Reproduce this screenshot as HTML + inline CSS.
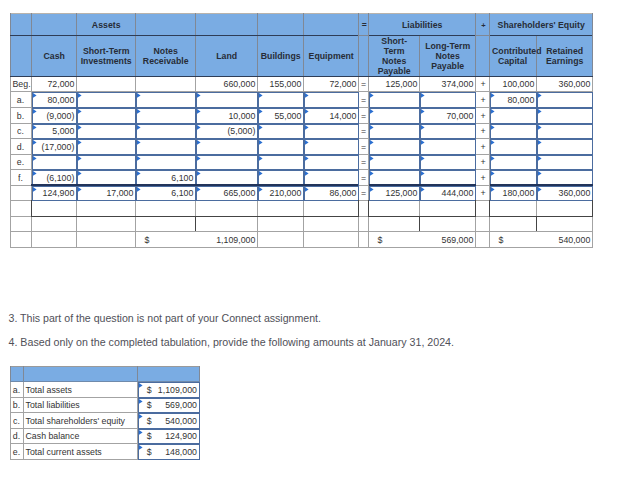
<!DOCTYPE html>
<html><head><meta charset="utf-8"><style>
html,body{margin:0;padding:0;background:#fff;}
body{width:624px;height:482px;position:relative;overflow:hidden;font-family:"Liberation Sans",sans-serif;}
body>div,body>svg{position:absolute;box-sizing:content-box;}
.t{white-space:nowrap;}
</style></head><body>
<div style="left:10px;top:13px;width:583px;height:64px;background:#7aace3;"></div>
<div style="left:10px;top:91px;width:583px;height:1px;background:#a3a3a3;"></div>
<div style="left:10px;top:107px;width:583px;height:1px;background:#a3a3a3;"></div>
<div style="left:10px;top:123px;width:583px;height:1px;background:#a3a3a3;"></div>
<div style="left:10px;top:138px;width:583px;height:1px;background:#a3a3a3;"></div>
<div style="left:10px;top:154px;width:583px;height:1px;background:#a3a3a3;"></div>
<div style="left:10px;top:169px;width:583px;height:1px;background:#a3a3a3;"></div>
<div style="left:10px;top:185px;width:583px;height:1px;background:#a3a3a3;"></div>
<div style="left:10px;top:200px;width:583px;height:1px;background:#a3a3a3;"></div>
<div style="left:10px;top:216px;width:583px;height:1px;background:#a3a3a3;"></div>
<div style="left:10px;top:231px;width:583px;height:1px;background:#a3a3a3;"></div>
<div style="left:10px;top:247px;width:583px;height:1px;background:#a3a3a3;"></div>
<div style="left:10px;top:76px;width:1px;height:172px;background:#a3a3a3;"></div>
<div style="left:31px;top:76px;width:1px;height:172px;background:#a3a3a3;"></div>
<div style="left:76px;top:76px;width:1px;height:172px;background:#a3a3a3;"></div>
<div style="left:135px;top:76px;width:1px;height:172px;background:#a3a3a3;"></div>
<div style="left:195px;top:76px;width:1px;height:172px;background:#a3a3a3;"></div>
<div style="left:257px;top:76px;width:1px;height:172px;background:#a3a3a3;"></div>
<div style="left:303px;top:76px;width:1px;height:172px;background:#a3a3a3;"></div>
<div style="left:358px;top:76px;width:1px;height:172px;background:#a3a3a3;"></div>
<div style="left:368px;top:76px;width:1px;height:172px;background:#a3a3a3;"></div>
<div style="left:419px;top:76px;width:1px;height:172px;background:#a3a3a3;"></div>
<div style="left:475px;top:76px;width:1px;height:172px;background:#a3a3a3;"></div>
<div style="left:489px;top:76px;width:1px;height:172px;background:#a3a3a3;"></div>
<div style="left:536px;top:76px;width:1px;height:172px;background:#a3a3a3;"></div>
<div style="left:592px;top:76px;width:1px;height:172px;background:#a3a3a3;"></div>
<div style="left:10px;top:13px;width:583px;height:1px;background:#b8b3ac;"></div>
<div style="left:10px;top:13px;width:1px;height:63px;background:#808895;"></div>
<div style="left:31px;top:13px;width:1px;height:63px;background:#808895;"></div>
<div style="left:76px;top:13px;width:1px;height:63px;background:#808895;"></div>
<div style="left:135px;top:13px;width:1px;height:63px;background:#808895;"></div>
<div style="left:195px;top:13px;width:1px;height:63px;background:#808895;"></div>
<div style="left:257px;top:13px;width:1px;height:63px;background:#808895;"></div>
<div style="left:303px;top:13px;width:1px;height:63px;background:#808895;"></div>
<div style="left:358px;top:13px;width:1px;height:63px;background:#808895;"></div>
<div style="left:368px;top:13px;width:1px;height:63px;background:#808895;"></div>
<div style="left:419px;top:35px;width:1px;height:41px;background:#808895;"></div>
<div style="left:475px;top:13px;width:1px;height:63px;background:#808895;"></div>
<div style="left:489px;top:13px;width:1px;height:63px;background:#808895;"></div>
<div style="left:536px;top:35px;width:1px;height:41px;background:#808895;"></div>
<div style="left:592px;top:13px;width:1px;height:63px;background:#808895;"></div>
<div style="left:10px;top:35px;width:348px;height:1px;background:#2e3d57;"></div>
<div style="left:369px;top:35px;width:106px;height:1px;background:#2e3d57;"></div>
<div style="left:490px;top:35px;width:102px;height:1px;background:#2e3d57;"></div>
<div style="left:10px;top:76px;width:583px;height:1px;background:#2e3d57;"></div>
<div style="left:359px;top:35px;width:9px;height:1px;background:#808895;"></div>
<div style="left:476px;top:35px;width:13px;height:1px;background:#808895;"></div>
<div class="t" style="left:56.7px;top:20.15px;width:99px;font-size:8.75px;font-weight:bold;line-height:10.3px;text-align:center;color:#272c37;white-space:nowrap;transform:scaleY(1.08)">Assets</div>
<div class="t" style="left:339.2px;top:20.15px;width:50.0px;font-size:8.75px;font-weight:bold;line-height:10.3px;text-align:center;color:#272c37;white-space:nowrap;transform:scaleY(1.08)"><span style="font-size:8.6px;position:relative;top:-0.2px">=</span></div>
<div class="t" style="left:348.7px;top:20.15px;width:147px;font-size:8.75px;font-weight:bold;line-height:10.3px;text-align:center;color:#272c37;white-space:nowrap;transform:scaleY(1.08)">Liabilities</div>
<div class="t" style="left:456.5px;top:20.15px;width:54.0px;font-size:8.75px;font-weight:bold;line-height:10.3px;text-align:center;color:#272c37;white-space:nowrap;transform:scaleY(1.08)"><span style="font-size:7.5px">+</span></div>
<div class="t" style="left:469.7px;top:20.15px;width:143px;font-size:8.75px;font-weight:bold;line-height:10.3px;text-align:center;color:#272c37;white-space:nowrap;transform:scaleY(1.08)">Shareholders' Equity</div>
<div class="t" style="left:11.7px;top:50.95px;width:85px;font-size:8.75px;font-weight:bold;line-height:10.3px;text-align:center;color:#272c37;white-space:nowrap;transform:scaleY(1.08)">Cash</div>
<div class="t" style="left:56.7px;top:45.80px;width:99px;font-size:8.75px;font-weight:bold;line-height:10.3px;text-align:center;color:#272c37;white-space:nowrap;transform:scaleY(1.08)">Short-Term</div>
<div class="t" style="left:56.7px;top:56.10px;width:99px;font-size:8.75px;font-weight:bold;line-height:10.3px;text-align:center;color:#272c37;white-space:nowrap;transform:scaleY(1.08)">Investments</div>
<div class="t" style="left:115.7px;top:45.80px;width:100px;font-size:8.75px;font-weight:bold;line-height:10.3px;text-align:center;color:#272c37;white-space:nowrap;transform:scaleY(1.08)">Notes</div>
<div class="t" style="left:115.7px;top:56.10px;width:100px;font-size:8.75px;font-weight:bold;line-height:10.3px;text-align:center;color:#272c37;white-space:nowrap;transform:scaleY(1.08)">Receivable</div>
<div class="t" style="left:175.7px;top:50.95px;width:102px;font-size:8.75px;font-weight:bold;line-height:10.3px;text-align:center;color:#272c37;white-space:nowrap;transform:scaleY(1.08)">Land</div>
<div class="t" style="left:237.7px;top:50.95px;width:86px;font-size:8.75px;font-weight:bold;line-height:10.3px;text-align:center;color:#272c37;white-space:nowrap;transform:scaleY(1.08)">Buildings</div>
<div class="t" style="left:283.7px;top:50.95px;width:95px;font-size:8.75px;font-weight:bold;line-height:10.3px;text-align:center;color:#272c37;white-space:nowrap;transform:scaleY(1.08)">Equipment</div>
<div class="t" style="left:348.7px;top:35.50px;width:91px;font-size:8.75px;font-weight:bold;line-height:10.3px;text-align:center;color:#272c37;white-space:nowrap;transform:scaleY(1.08)">Short-</div>
<div class="t" style="left:348.7px;top:45.80px;width:91px;font-size:8.75px;font-weight:bold;line-height:10.3px;text-align:center;color:#272c37;white-space:nowrap;transform:scaleY(1.08)">Term</div>
<div class="t" style="left:348.7px;top:56.10px;width:91px;font-size:8.75px;font-weight:bold;line-height:10.3px;text-align:center;color:#272c37;white-space:nowrap;transform:scaleY(1.08)">Notes</div>
<div class="t" style="left:348.7px;top:66.40px;width:91px;font-size:8.75px;font-weight:bold;line-height:10.3px;text-align:center;color:#272c37;white-space:nowrap;transform:scaleY(1.08)">Payable</div>
<div class="t" style="left:399.7px;top:40.65px;width:96px;font-size:8.75px;font-weight:bold;line-height:10.3px;text-align:center;color:#272c37;white-space:nowrap;transform:scaleY(1.08)">Long-Term</div>
<div class="t" style="left:399.7px;top:50.95px;width:96px;font-size:8.75px;font-weight:bold;line-height:10.3px;text-align:center;color:#272c37;white-space:nowrap;transform:scaleY(1.08)">Notes</div>
<div class="t" style="left:399.7px;top:61.25px;width:96px;font-size:8.75px;font-weight:bold;line-height:10.3px;text-align:center;color:#272c37;white-space:nowrap;transform:scaleY(1.08)">Payable</div>
<div class="t" style="left:492px;top:45.80px;font-size:8.75px;font-weight:bold;line-height:10.3px;color:#272c37;white-space:nowrap;transform:scaleY(1.08)">Contributed</div>
<div class="t" style="left:469px;top:56.10px;width:87px;font-size:8.75px;font-weight:bold;line-height:10.3px;text-align:center;color:#272c37;white-space:nowrap;transform:scaleY(1.08)">Capital</div>
<div class="t" style="left:516.7px;top:45.80px;width:96px;font-size:8.75px;font-weight:bold;line-height:10.3px;text-align:center;color:#272c37;white-space:nowrap;transform:scaleY(1.08)">Retained</div>
<div class="t" style="left:516.7px;top:56.10px;width:96px;font-size:8.75px;font-weight:bold;line-height:10.3px;text-align:center;color:#272c37;white-space:nowrap;transform:scaleY(1.08)">Earnings</div>
<div class="t" style="left:10px;top:77.3px;width:27px;height:15px;font-size:8.8px;text-align:left;color:#333333;transform:scaleY(1.1);padding-left:2.5px;box-sizing:border-box;line-height:15px;">Beg.</div>
<div class="t" style="left:358.6px;top:77.3px;width:10.0px;height:15px;font-size:8.8px;text-align:center;color:#333333;transform:scaleY(1.1);line-height:15px;">=</div>
<div class="t" style="left:476px;top:77.3px;width:14px;height:15px;font-size:8.8px;text-align:center;color:#333333;transform:scaleY(1.1);line-height:15px;">+</div>
<div class="t" style="left:31px;top:77.3px;width:45px;height:15px;font-size:8.8px;text-align:right;color:#333333;transform:scaleY(1.1);padding-right:1.7px;box-sizing:border-box;line-height:15px;">72,000</div>
<div class="t" style="left:195px;top:77.3px;width:62px;height:15px;font-size:8.8px;text-align:right;color:#333333;transform:scaleY(1.1);padding-right:1.7px;box-sizing:border-box;line-height:15px;">660,000</div>
<div class="t" style="left:257px;top:77.3px;width:46px;height:15px;font-size:8.8px;text-align:right;color:#333333;transform:scaleY(1.1);padding-right:1.7px;box-sizing:border-box;line-height:15px;">155,000</div>
<div class="t" style="left:303px;top:77.3px;width:55px;height:15px;font-size:8.8px;text-align:right;color:#333333;transform:scaleY(1.1);padding-right:1.7px;box-sizing:border-box;line-height:15px;">72,000</div>
<div class="t" style="left:368px;top:77.3px;width:51px;height:15px;font-size:8.8px;text-align:right;color:#333333;transform:scaleY(1.1);padding-right:1.7px;box-sizing:border-box;line-height:15px;">125,000</div>
<div class="t" style="left:419px;top:77.3px;width:56px;height:15px;font-size:8.8px;text-align:right;color:#333333;transform:scaleY(1.1);padding-right:1.7px;box-sizing:border-box;line-height:15px;">374,000</div>
<div class="t" style="left:489px;top:77.3px;width:47px;height:15px;font-size:8.8px;text-align:right;color:#333333;transform:scaleY(1.1);padding-right:1.7px;box-sizing:border-box;line-height:15px;">100,000</div>
<div class="t" style="left:536px;top:77.3px;width:56px;height:15px;font-size:8.8px;text-align:right;color:#333333;transform:scaleY(1.1);padding-right:1.7px;box-sizing:border-box;line-height:15px;">360,000</div>
<div class="t" style="left:10px;top:92.3px;width:21px;height:16px;font-size:8.8px;text-align:center;color:#333333;transform:scaleY(1.1);line-height:16px;">a.</div>
<div class="t" style="left:358.6px;top:92.3px;width:10.0px;height:16px;font-size:8.8px;text-align:center;color:#333333;transform:scaleY(1.1);line-height:16px;">=</div>
<div class="t" style="left:476px;top:92.3px;width:14px;height:16px;font-size:8.8px;text-align:center;color:#333333;transform:scaleY(1.1);line-height:16px;">+</div>
<div style="left:32px;top:92px;width:43px;height:14px;border:1px solid #4b6c9f;"></div>
<svg style="position:absolute;left:33px;top:93px" width="5" height="6"><polygon points="0,0 3.6,2.4 0,4.8" fill="#2b6fd0"/></svg>
<div class="t" style="left:31px;top:92.3px;width:45px;height:16px;font-size:8.8px;text-align:right;color:#333333;transform:scaleY(1.1);padding-right:1.7px;box-sizing:border-box;line-height:16px;">80,000</div>
<div style="left:77px;top:92px;width:57px;height:14px;border:1px solid #4b6c9f;"></div>
<svg style="position:absolute;left:78px;top:93px" width="5" height="6"><polygon points="0,0 3.6,2.4 0,4.8" fill="#2b6fd0"/></svg>
<div style="left:136px;top:92px;width:58px;height:14px;border:1px solid #4b6c9f;"></div>
<svg style="position:absolute;left:137px;top:93px" width="5" height="6"><polygon points="0,0 3.6,2.4 0,4.8" fill="#2b6fd0"/></svg>
<div style="left:196px;top:92px;width:60px;height:14px;border:1px solid #4b6c9f;"></div>
<svg style="position:absolute;left:197px;top:93px" width="5" height="6"><polygon points="0,0 3.6,2.4 0,4.8" fill="#2b6fd0"/></svg>
<div style="left:258px;top:92px;width:44px;height:14px;border:1px solid #4b6c9f;"></div>
<svg style="position:absolute;left:259px;top:93px" width="5" height="6"><polygon points="0,0 3.6,2.4 0,4.8" fill="#2b6fd0"/></svg>
<div style="left:304px;top:92px;width:53px;height:14px;border:1px solid #4b6c9f;"></div>
<svg style="position:absolute;left:305px;top:93px" width="5" height="6"><polygon points="0,0 3.6,2.4 0,4.8" fill="#2b6fd0"/></svg>
<div style="left:369px;top:92px;width:49px;height:14px;border:1px solid #4b6c9f;"></div>
<svg style="position:absolute;left:370px;top:93px" width="5" height="6"><polygon points="0,0 3.6,2.4 0,4.8" fill="#2b6fd0"/></svg>
<div style="left:420px;top:92px;width:54px;height:14px;border:1px solid #4b6c9f;"></div>
<svg style="position:absolute;left:421px;top:93px" width="5" height="6"><polygon points="0,0 3.6,2.4 0,4.8" fill="#2b6fd0"/></svg>
<div style="left:490px;top:92px;width:45px;height:14px;border:1px solid #4b6c9f;"></div>
<svg style="position:absolute;left:491px;top:93px" width="5" height="6"><polygon points="0,0 3.6,2.4 0,4.8" fill="#2b6fd0"/></svg>
<div class="t" style="left:489px;top:92.3px;width:47px;height:16px;font-size:8.8px;text-align:right;color:#333333;transform:scaleY(1.1);padding-right:1.7px;box-sizing:border-box;line-height:16px;">80,000</div>
<div style="left:537px;top:92px;width:54px;height:14px;border:1px solid #4b6c9f;"></div>
<svg style="position:absolute;left:538px;top:93px" width="5" height="6"><polygon points="0,0 3.6,2.4 0,4.8" fill="#2b6fd0"/></svg>
<div class="t" style="left:10px;top:108.3px;width:21px;height:16px;font-size:8.8px;text-align:center;color:#333333;transform:scaleY(1.1);line-height:16px;">b.</div>
<div class="t" style="left:358.6px;top:108.3px;width:10.0px;height:16px;font-size:8.8px;text-align:center;color:#333333;transform:scaleY(1.1);line-height:16px;">=</div>
<div class="t" style="left:476px;top:108.3px;width:14px;height:16px;font-size:8.8px;text-align:center;color:#333333;transform:scaleY(1.1);line-height:16px;">+</div>
<div style="left:32px;top:108px;width:43px;height:14px;border:1px solid #4b6c9f;"></div>
<svg style="position:absolute;left:33px;top:109px" width="5" height="6"><polygon points="0,0 3.6,2.4 0,4.8" fill="#2b6fd0"/></svg>
<div class="t" style="left:31px;top:108.3px;width:45px;height:16px;font-size:8.8px;text-align:right;color:#333333;transform:scaleY(1.1);padding-right:1.7px;box-sizing:border-box;line-height:16px;">(9,000)</div>
<div style="left:77px;top:108px;width:57px;height:14px;border:1px solid #4b6c9f;"></div>
<svg style="position:absolute;left:78px;top:109px" width="5" height="6"><polygon points="0,0 3.6,2.4 0,4.8" fill="#2b6fd0"/></svg>
<div style="left:136px;top:108px;width:58px;height:14px;border:1px solid #4b6c9f;"></div>
<svg style="position:absolute;left:137px;top:109px" width="5" height="6"><polygon points="0,0 3.6,2.4 0,4.8" fill="#2b6fd0"/></svg>
<div style="left:196px;top:108px;width:60px;height:14px;border:1px solid #4b6c9f;"></div>
<svg style="position:absolute;left:197px;top:109px" width="5" height="6"><polygon points="0,0 3.6,2.4 0,4.8" fill="#2b6fd0"/></svg>
<div class="t" style="left:195px;top:108.3px;width:62px;height:16px;font-size:8.8px;text-align:right;color:#333333;transform:scaleY(1.1);padding-right:1.7px;box-sizing:border-box;line-height:16px;">10,000</div>
<div style="left:258px;top:108px;width:44px;height:14px;border:1px solid #4b6c9f;"></div>
<svg style="position:absolute;left:259px;top:109px" width="5" height="6"><polygon points="0,0 3.6,2.4 0,4.8" fill="#2b6fd0"/></svg>
<div class="t" style="left:257px;top:108.3px;width:46px;height:16px;font-size:8.8px;text-align:right;color:#333333;transform:scaleY(1.1);padding-right:1.7px;box-sizing:border-box;line-height:16px;">55,000</div>
<div style="left:304px;top:108px;width:53px;height:14px;border:1px solid #4b6c9f;"></div>
<svg style="position:absolute;left:305px;top:109px" width="5" height="6"><polygon points="0,0 3.6,2.4 0,4.8" fill="#2b6fd0"/></svg>
<div class="t" style="left:303px;top:108.3px;width:55px;height:16px;font-size:8.8px;text-align:right;color:#333333;transform:scaleY(1.1);padding-right:1.7px;box-sizing:border-box;line-height:16px;">14,000</div>
<div style="left:369px;top:108px;width:49px;height:14px;border:1px solid #4b6c9f;"></div>
<svg style="position:absolute;left:370px;top:109px" width="5" height="6"><polygon points="0,0 3.6,2.4 0,4.8" fill="#2b6fd0"/></svg>
<div style="left:420px;top:108px;width:54px;height:14px;border:1px solid #4b6c9f;"></div>
<svg style="position:absolute;left:421px;top:109px" width="5" height="6"><polygon points="0,0 3.6,2.4 0,4.8" fill="#2b6fd0"/></svg>
<div class="t" style="left:419px;top:108.3px;width:56px;height:16px;font-size:8.8px;text-align:right;color:#333333;transform:scaleY(1.1);padding-right:1.7px;box-sizing:border-box;line-height:16px;">70,000</div>
<div style="left:490px;top:108px;width:45px;height:14px;border:1px solid #4b6c9f;"></div>
<svg style="position:absolute;left:491px;top:109px" width="5" height="6"><polygon points="0,0 3.6,2.4 0,4.8" fill="#2b6fd0"/></svg>
<div style="left:537px;top:108px;width:54px;height:14px;border:1px solid #4b6c9f;"></div>
<svg style="position:absolute;left:538px;top:109px" width="5" height="6"><polygon points="0,0 3.6,2.4 0,4.8" fill="#2b6fd0"/></svg>
<div class="t" style="left:10px;top:124.3px;width:21px;height:15px;font-size:8.8px;text-align:center;color:#333333;transform:scaleY(1.1);line-height:15px;">c.</div>
<div class="t" style="left:358.6px;top:124.3px;width:10.0px;height:15px;font-size:8.8px;text-align:center;color:#333333;transform:scaleY(1.1);line-height:15px;">=</div>
<div class="t" style="left:476px;top:124.3px;width:14px;height:15px;font-size:8.8px;text-align:center;color:#333333;transform:scaleY(1.1);line-height:15px;">+</div>
<div style="left:32px;top:124px;width:43px;height:13px;border:1px solid #4b6c9f;"></div>
<svg style="position:absolute;left:33px;top:125px" width="5" height="6"><polygon points="0,0 3.6,2.4 0,4.8" fill="#2b6fd0"/></svg>
<div class="t" style="left:31px;top:124.3px;width:45px;height:15px;font-size:8.8px;text-align:right;color:#333333;transform:scaleY(1.1);padding-right:1.7px;box-sizing:border-box;line-height:15px;">5,000</div>
<div style="left:77px;top:124px;width:57px;height:13px;border:1px solid #4b6c9f;"></div>
<svg style="position:absolute;left:78px;top:125px" width="5" height="6"><polygon points="0,0 3.6,2.4 0,4.8" fill="#2b6fd0"/></svg>
<div style="left:136px;top:124px;width:58px;height:13px;border:1px solid #4b6c9f;"></div>
<svg style="position:absolute;left:137px;top:125px" width="5" height="6"><polygon points="0,0 3.6,2.4 0,4.8" fill="#2b6fd0"/></svg>
<div style="left:196px;top:124px;width:60px;height:13px;border:1px solid #4b6c9f;"></div>
<svg style="position:absolute;left:197px;top:125px" width="5" height="6"><polygon points="0,0 3.6,2.4 0,4.8" fill="#2b6fd0"/></svg>
<div class="t" style="left:195px;top:124.3px;width:62px;height:15px;font-size:8.8px;text-align:right;color:#333333;transform:scaleY(1.1);padding-right:1.7px;box-sizing:border-box;line-height:15px;">(5,000)</div>
<div style="left:258px;top:124px;width:44px;height:13px;border:1px solid #4b6c9f;"></div>
<svg style="position:absolute;left:259px;top:125px" width="5" height="6"><polygon points="0,0 3.6,2.4 0,4.8" fill="#2b6fd0"/></svg>
<div style="left:304px;top:124px;width:53px;height:13px;border:1px solid #4b6c9f;"></div>
<svg style="position:absolute;left:305px;top:125px" width="5" height="6"><polygon points="0,0 3.6,2.4 0,4.8" fill="#2b6fd0"/></svg>
<div style="left:369px;top:124px;width:49px;height:13px;border:1px solid #4b6c9f;"></div>
<svg style="position:absolute;left:370px;top:125px" width="5" height="6"><polygon points="0,0 3.6,2.4 0,4.8" fill="#2b6fd0"/></svg>
<div style="left:420px;top:124px;width:54px;height:13px;border:1px solid #4b6c9f;"></div>
<svg style="position:absolute;left:421px;top:125px" width="5" height="6"><polygon points="0,0 3.6,2.4 0,4.8" fill="#2b6fd0"/></svg>
<div style="left:490px;top:124px;width:45px;height:13px;border:1px solid #4b6c9f;"></div>
<svg style="position:absolute;left:491px;top:125px" width="5" height="6"><polygon points="0,0 3.6,2.4 0,4.8" fill="#2b6fd0"/></svg>
<div style="left:537px;top:124px;width:54px;height:13px;border:1px solid #4b6c9f;"></div>
<svg style="position:absolute;left:538px;top:125px" width="5" height="6"><polygon points="0,0 3.6,2.4 0,4.8" fill="#2b6fd0"/></svg>
<div class="t" style="left:10px;top:139.3px;width:21px;height:16px;font-size:8.8px;text-align:center;color:#333333;transform:scaleY(1.1);line-height:16px;">d.</div>
<div class="t" style="left:358.6px;top:139.3px;width:10.0px;height:16px;font-size:8.8px;text-align:center;color:#333333;transform:scaleY(1.1);line-height:16px;">=</div>
<div class="t" style="left:476px;top:139.3px;width:14px;height:16px;font-size:8.8px;text-align:center;color:#333333;transform:scaleY(1.1);line-height:16px;">+</div>
<div style="left:32px;top:139px;width:43px;height:14px;border:1px solid #4b6c9f;"></div>
<svg style="position:absolute;left:33px;top:140px" width="5" height="6"><polygon points="0,0 3.6,2.4 0,4.8" fill="#2b6fd0"/></svg>
<div class="t" style="left:31px;top:139.3px;width:45px;height:16px;font-size:8.8px;text-align:right;color:#333333;transform:scaleY(1.1);padding-right:1.7px;box-sizing:border-box;line-height:16px;">(17,000)</div>
<div style="left:77px;top:139px;width:57px;height:14px;border:1px solid #4b6c9f;"></div>
<svg style="position:absolute;left:78px;top:140px" width="5" height="6"><polygon points="0,0 3.6,2.4 0,4.8" fill="#2b6fd0"/></svg>
<div style="left:136px;top:139px;width:58px;height:14px;border:1px solid #4b6c9f;"></div>
<svg style="position:absolute;left:137px;top:140px" width="5" height="6"><polygon points="0,0 3.6,2.4 0,4.8" fill="#2b6fd0"/></svg>
<div style="left:196px;top:139px;width:60px;height:14px;border:1px solid #4b6c9f;"></div>
<svg style="position:absolute;left:197px;top:140px" width="5" height="6"><polygon points="0,0 3.6,2.4 0,4.8" fill="#2b6fd0"/></svg>
<div style="left:258px;top:139px;width:44px;height:14px;border:1px solid #4b6c9f;"></div>
<svg style="position:absolute;left:259px;top:140px" width="5" height="6"><polygon points="0,0 3.6,2.4 0,4.8" fill="#2b6fd0"/></svg>
<div style="left:304px;top:139px;width:53px;height:14px;border:1px solid #4b6c9f;"></div>
<svg style="position:absolute;left:305px;top:140px" width="5" height="6"><polygon points="0,0 3.6,2.4 0,4.8" fill="#2b6fd0"/></svg>
<div style="left:369px;top:139px;width:49px;height:14px;border:1px solid #4b6c9f;"></div>
<svg style="position:absolute;left:370px;top:140px" width="5" height="6"><polygon points="0,0 3.6,2.4 0,4.8" fill="#2b6fd0"/></svg>
<div style="left:420px;top:139px;width:54px;height:14px;border:1px solid #4b6c9f;"></div>
<svg style="position:absolute;left:421px;top:140px" width="5" height="6"><polygon points="0,0 3.6,2.4 0,4.8" fill="#2b6fd0"/></svg>
<div style="left:490px;top:139px;width:45px;height:14px;border:1px solid #4b6c9f;"></div>
<svg style="position:absolute;left:491px;top:140px" width="5" height="6"><polygon points="0,0 3.6,2.4 0,4.8" fill="#2b6fd0"/></svg>
<div style="left:537px;top:139px;width:54px;height:14px;border:1px solid #4b6c9f;"></div>
<svg style="position:absolute;left:538px;top:140px" width="5" height="6"><polygon points="0,0 3.6,2.4 0,4.8" fill="#2b6fd0"/></svg>
<div class="t" style="left:10px;top:155.3px;width:21px;height:15px;font-size:8.8px;text-align:center;color:#333333;transform:scaleY(1.1);line-height:15px;">e.</div>
<div class="t" style="left:358.6px;top:155.3px;width:10.0px;height:15px;font-size:8.8px;text-align:center;color:#333333;transform:scaleY(1.1);line-height:15px;">=</div>
<div class="t" style="left:476px;top:155.3px;width:14px;height:15px;font-size:8.8px;text-align:center;color:#333333;transform:scaleY(1.1);line-height:15px;">+</div>
<div style="left:32px;top:155px;width:43px;height:13px;border:1px solid #4b6c9f;"></div>
<svg style="position:absolute;left:33px;top:156px" width="5" height="6"><polygon points="0,0 3.6,2.4 0,4.8" fill="#2b6fd0"/></svg>
<div style="left:77px;top:155px;width:57px;height:13px;border:1px solid #4b6c9f;"></div>
<svg style="position:absolute;left:78px;top:156px" width="5" height="6"><polygon points="0,0 3.6,2.4 0,4.8" fill="#2b6fd0"/></svg>
<div style="left:136px;top:155px;width:58px;height:13px;border:1px solid #4b6c9f;"></div>
<svg style="position:absolute;left:137px;top:156px" width="5" height="6"><polygon points="0,0 3.6,2.4 0,4.8" fill="#2b6fd0"/></svg>
<div style="left:196px;top:155px;width:60px;height:13px;border:1px solid #4b6c9f;"></div>
<svg style="position:absolute;left:197px;top:156px" width="5" height="6"><polygon points="0,0 3.6,2.4 0,4.8" fill="#2b6fd0"/></svg>
<div style="left:258px;top:155px;width:44px;height:13px;border:1px solid #4b6c9f;"></div>
<svg style="position:absolute;left:259px;top:156px" width="5" height="6"><polygon points="0,0 3.6,2.4 0,4.8" fill="#2b6fd0"/></svg>
<div style="left:304px;top:155px;width:53px;height:13px;border:1px solid #4b6c9f;"></div>
<svg style="position:absolute;left:305px;top:156px" width="5" height="6"><polygon points="0,0 3.6,2.4 0,4.8" fill="#2b6fd0"/></svg>
<div style="left:369px;top:155px;width:49px;height:13px;border:1px solid #4b6c9f;"></div>
<svg style="position:absolute;left:370px;top:156px" width="5" height="6"><polygon points="0,0 3.6,2.4 0,4.8" fill="#2b6fd0"/></svg>
<div style="left:420px;top:155px;width:54px;height:13px;border:1px solid #4b6c9f;"></div>
<svg style="position:absolute;left:421px;top:156px" width="5" height="6"><polygon points="0,0 3.6,2.4 0,4.8" fill="#2b6fd0"/></svg>
<div style="left:490px;top:155px;width:45px;height:13px;border:1px solid #4b6c9f;"></div>
<svg style="position:absolute;left:491px;top:156px" width="5" height="6"><polygon points="0,0 3.6,2.4 0,4.8" fill="#2b6fd0"/></svg>
<div style="left:537px;top:155px;width:54px;height:13px;border:1px solid #4b6c9f;"></div>
<svg style="position:absolute;left:538px;top:156px" width="5" height="6"><polygon points="0,0 3.6,2.4 0,4.8" fill="#2b6fd0"/></svg>
<div class="t" style="left:10px;top:170.3px;width:21px;height:16px;font-size:8.8px;text-align:center;color:#333333;transform:scaleY(1.1);line-height:16px;">f.</div>
<div class="t" style="left:358.6px;top:170.3px;width:10.0px;height:16px;font-size:8.8px;text-align:center;color:#333333;transform:scaleY(1.1);line-height:16px;">=</div>
<div class="t" style="left:476px;top:170.3px;width:14px;height:16px;font-size:8.8px;text-align:center;color:#333333;transform:scaleY(1.1);line-height:16px;">+</div>
<div style="left:32px;top:170px;width:43px;height:14px;border:1px solid #4b6c9f;"></div>
<svg style="position:absolute;left:33px;top:171px" width="5" height="6"><polygon points="0,0 3.6,2.4 0,4.8" fill="#2b6fd0"/></svg>
<div class="t" style="left:31px;top:170.3px;width:45px;height:16px;font-size:8.8px;text-align:right;color:#333333;transform:scaleY(1.1);padding-right:1.7px;box-sizing:border-box;line-height:16px;">(6,100)</div>
<div style="left:77px;top:170px;width:57px;height:14px;border:1px solid #4b6c9f;"></div>
<svg style="position:absolute;left:78px;top:171px" width="5" height="6"><polygon points="0,0 3.6,2.4 0,4.8" fill="#2b6fd0"/></svg>
<div style="left:136px;top:170px;width:58px;height:14px;border:1px solid #4b6c9f;"></div>
<svg style="position:absolute;left:137px;top:171px" width="5" height="6"><polygon points="0,0 3.6,2.4 0,4.8" fill="#2b6fd0"/></svg>
<div class="t" style="left:135px;top:170.3px;width:60px;height:16px;font-size:8.8px;text-align:right;color:#333333;transform:scaleY(1.1);padding-right:1.7px;box-sizing:border-box;line-height:16px;">6,100</div>
<div style="left:196px;top:170px;width:60px;height:14px;border:1px solid #4b6c9f;"></div>
<svg style="position:absolute;left:197px;top:171px" width="5" height="6"><polygon points="0,0 3.6,2.4 0,4.8" fill="#2b6fd0"/></svg>
<div style="left:258px;top:170px;width:44px;height:14px;border:1px solid #4b6c9f;"></div>
<svg style="position:absolute;left:259px;top:171px" width="5" height="6"><polygon points="0,0 3.6,2.4 0,4.8" fill="#2b6fd0"/></svg>
<div style="left:304px;top:170px;width:53px;height:14px;border:1px solid #4b6c9f;"></div>
<svg style="position:absolute;left:305px;top:171px" width="5" height="6"><polygon points="0,0 3.6,2.4 0,4.8" fill="#2b6fd0"/></svg>
<div style="left:369px;top:170px;width:49px;height:14px;border:1px solid #4b6c9f;"></div>
<svg style="position:absolute;left:370px;top:171px" width="5" height="6"><polygon points="0,0 3.6,2.4 0,4.8" fill="#2b6fd0"/></svg>
<div style="left:420px;top:170px;width:54px;height:14px;border:1px solid #4b6c9f;"></div>
<svg style="position:absolute;left:421px;top:171px" width="5" height="6"><polygon points="0,0 3.6,2.4 0,4.8" fill="#2b6fd0"/></svg>
<div style="left:490px;top:170px;width:45px;height:14px;border:1px solid #4b6c9f;"></div>
<svg style="position:absolute;left:491px;top:171px" width="5" height="6"><polygon points="0,0 3.6,2.4 0,4.8" fill="#2b6fd0"/></svg>
<div style="left:537px;top:170px;width:54px;height:14px;border:1px solid #4b6c9f;"></div>
<svg style="position:absolute;left:538px;top:171px" width="5" height="6"><polygon points="0,0 3.6,2.4 0,4.8" fill="#2b6fd0"/></svg>
<div class="t" style="left:358.6px;top:186.3px;width:10.0px;height:15px;font-size:8.8px;text-align:center;color:#333333;transform:scaleY(1.1);line-height:15px;">=</div>
<div class="t" style="left:476px;top:186.3px;width:14px;height:15px;font-size:8.8px;text-align:center;color:#333333;transform:scaleY(1.1);line-height:15px;">+</div>
<div style="left:32px;top:186px;width:43px;height:13px;border:1px solid #4b6c9f;"></div>
<svg style="position:absolute;left:33px;top:187px" width="5" height="6"><polygon points="0,0 3.6,2.4 0,4.8" fill="#2b6fd0"/></svg>
<div class="t" style="left:31px;top:186.3px;width:45px;height:15px;font-size:8.8px;text-align:right;color:#333333;transform:scaleY(1.1);padding-right:1.7px;box-sizing:border-box;line-height:15px;">124,900</div>
<div style="left:77px;top:186px;width:57px;height:13px;border:1px solid #4b6c9f;"></div>
<svg style="position:absolute;left:78px;top:187px" width="5" height="6"><polygon points="0,0 3.6,2.4 0,4.8" fill="#2b6fd0"/></svg>
<div class="t" style="left:76px;top:186.3px;width:59px;height:15px;font-size:8.8px;text-align:right;color:#333333;transform:scaleY(1.1);padding-right:1.7px;box-sizing:border-box;line-height:15px;">17,000</div>
<div style="left:136px;top:186px;width:58px;height:13px;border:1px solid #4b6c9f;"></div>
<svg style="position:absolute;left:137px;top:187px" width="5" height="6"><polygon points="0,0 3.6,2.4 0,4.8" fill="#2b6fd0"/></svg>
<div class="t" style="left:135px;top:186.3px;width:60px;height:15px;font-size:8.8px;text-align:right;color:#333333;transform:scaleY(1.1);padding-right:1.7px;box-sizing:border-box;line-height:15px;">6,100</div>
<div style="left:196px;top:186px;width:60px;height:13px;border:1px solid #4b6c9f;"></div>
<svg style="position:absolute;left:197px;top:187px" width="5" height="6"><polygon points="0,0 3.6,2.4 0,4.8" fill="#2b6fd0"/></svg>
<div class="t" style="left:195px;top:186.3px;width:62px;height:15px;font-size:8.8px;text-align:right;color:#333333;transform:scaleY(1.1);padding-right:1.7px;box-sizing:border-box;line-height:15px;">665,000</div>
<div style="left:258px;top:186px;width:44px;height:13px;border:1px solid #4b6c9f;"></div>
<svg style="position:absolute;left:259px;top:187px" width="5" height="6"><polygon points="0,0 3.6,2.4 0,4.8" fill="#2b6fd0"/></svg>
<div class="t" style="left:257px;top:186.3px;width:46px;height:15px;font-size:8.8px;text-align:right;color:#333333;transform:scaleY(1.1);padding-right:1.7px;box-sizing:border-box;line-height:15px;">210,000</div>
<div style="left:304px;top:186px;width:53px;height:13px;border:1px solid #4b6c9f;"></div>
<svg style="position:absolute;left:305px;top:187px" width="5" height="6"><polygon points="0,0 3.6,2.4 0,4.8" fill="#2b6fd0"/></svg>
<div class="t" style="left:303px;top:186.3px;width:55px;height:15px;font-size:8.8px;text-align:right;color:#333333;transform:scaleY(1.1);padding-right:1.7px;box-sizing:border-box;line-height:15px;">86,000</div>
<div style="left:369px;top:186px;width:49px;height:13px;border:1px solid #4b6c9f;"></div>
<svg style="position:absolute;left:370px;top:187px" width="5" height="6"><polygon points="0,0 3.6,2.4 0,4.8" fill="#2b6fd0"/></svg>
<div class="t" style="left:368px;top:186.3px;width:51px;height:15px;font-size:8.8px;text-align:right;color:#333333;transform:scaleY(1.1);padding-right:1.7px;box-sizing:border-box;line-height:15px;">125,000</div>
<div style="left:420px;top:186px;width:54px;height:13px;border:1px solid #4b6c9f;"></div>
<svg style="position:absolute;left:421px;top:187px" width="5" height="6"><polygon points="0,0 3.6,2.4 0,4.8" fill="#2b6fd0"/></svg>
<div class="t" style="left:419px;top:186.3px;width:56px;height:15px;font-size:8.8px;text-align:right;color:#333333;transform:scaleY(1.1);padding-right:1.7px;box-sizing:border-box;line-height:15px;">444,000</div>
<div style="left:490px;top:186px;width:45px;height:13px;border:1px solid #4b6c9f;"></div>
<svg style="position:absolute;left:491px;top:187px" width="5" height="6"><polygon points="0,0 3.6,2.4 0,4.8" fill="#2b6fd0"/></svg>
<div class="t" style="left:489px;top:186.3px;width:47px;height:15px;font-size:8.8px;text-align:right;color:#333333;transform:scaleY(1.1);padding-right:1.7px;box-sizing:border-box;line-height:15px;">180,000</div>
<div style="left:537px;top:186px;width:54px;height:13px;border:1px solid #4b6c9f;"></div>
<svg style="position:absolute;left:538px;top:187px" width="5" height="6"><polygon points="0,0 3.6,2.4 0,4.8" fill="#2b6fd0"/></svg>
<div class="t" style="left:536px;top:186.3px;width:56px;height:15px;font-size:8.8px;text-align:right;color:#333333;transform:scaleY(1.1);padding-right:1.7px;box-sizing:border-box;line-height:15px;">360,000</div>
<div style="left:31px;top:184px;width:327px;height:2px;background:#22345a;"></div>
<div style="left:369px;top:184px;width:107px;height:2px;background:#22345a;"></div>
<div style="left:490px;top:184px;width:103px;height:2px;background:#22345a;"></div>
<div style="left:31px;top:200px;width:1px;height:17px;background:#444444;"></div>
<div style="left:358px;top:200px;width:1px;height:17px;background:#444444;"></div>
<div style="left:31px;top:216px;width:328px;height:1px;background:#444444;"></div>
<div style="left:368px;top:200px;width:1px;height:17px;background:#444444;"></div>
<div style="left:475px;top:200px;width:1px;height:17px;background:#444444;"></div>
<div style="left:368px;top:216px;width:108px;height:1px;background:#444444;"></div>
<div style="left:489px;top:200px;width:1px;height:17px;background:#444444;"></div>
<div style="left:592px;top:200px;width:1px;height:17px;background:#444444;"></div>
<div style="left:489px;top:216px;width:104px;height:1px;background:#444444;"></div>
<div style="left:195px;top:216px;width:1px;height:15px;background:#444444;"></div>
<div style="left:419px;top:216px;width:1px;height:15px;background:#444444;"></div>
<div style="left:536px;top:216px;width:1px;height:15px;background:#444444;"></div>
<div style="left:195px;top:232px;width:1px;height:15px;background:#ffffff;"></div>
<div style="left:419px;top:232px;width:1px;height:15px;background:#ffffff;"></div>
<div style="left:536px;top:232px;width:1px;height:15px;background:#ffffff;"></div>
<div class="t" style="left:135px;top:232.3px;width:60px;height:16px;font-size:8.8px;text-align:left;color:#333333;transform:scaleY(1.1);padding-left:9.5px;box-sizing:border-box;line-height:16px;">$</div>
<div class="t" style="left:135px;top:232.3px;width:122px;height:16px;font-size:8.8px;text-align:right;color:#333333;transform:scaleY(1.1);padding-right:1.7px;box-sizing:border-box;line-height:16px;">1,109,000</div>
<div class="t" style="left:368px;top:232.3px;width:51px;height:16px;font-size:8.8px;text-align:left;color:#333333;transform:scaleY(1.1);padding-left:9.5px;box-sizing:border-box;line-height:16px;">$</div>
<div class="t" style="left:368px;top:232.3px;width:107px;height:16px;font-size:8.8px;text-align:right;color:#333333;transform:scaleY(1.1);padding-right:1.7px;box-sizing:border-box;line-height:16px;">569,000</div>
<div class="t" style="left:489px;top:232.3px;width:47px;height:16px;font-size:8.8px;text-align:left;color:#333333;transform:scaleY(1.1);padding-left:9.5px;box-sizing:border-box;line-height:16px;">$</div>
<div class="t" style="left:489px;top:232.3px;width:103px;height:16px;font-size:8.8px;text-align:right;color:#333333;transform:scaleY(1.1);padding-right:1.7px;box-sizing:border-box;line-height:16px;">540,000</div>
<div class="t" style="left:8.5px;top:311.4px;font-size:10.6px;line-height:14px;color:#505058;white-space:nowrap">3. This part of the question is not part of your Connect assignment.</div>
<div class="t" style="left:8.5px;top:335.4px;font-size:10.66px;line-height:14px;color:#505058;white-space:nowrap">4. Based only on the completed tabulation, provide the following amounts at January 31, 2024.</div>
<div style="left:10px;top:366px;width:190px;height:15px;background:#7aace3;"></div>
<div style="left:10px;top:366px;width:190px;height:1px;background:#9a9a9a;"></div>
<div style="left:10px;top:381px;width:190px;height:1px;background:#a3a3a3;"></div>
<div style="left:10px;top:397px;width:190px;height:1px;background:#a3a3a3;"></div>
<div style="left:10px;top:412px;width:190px;height:1px;background:#a3a3a3;"></div>
<div style="left:10px;top:428px;width:190px;height:1px;background:#a3a3a3;"></div>
<div style="left:10px;top:443px;width:190px;height:1px;background:#a3a3a3;"></div>
<div style="left:10px;top:459px;width:190px;height:1px;background:#a3a3a3;"></div>
<div style="left:10px;top:366px;width:1px;height:15px;background:#808895;"></div>
<div style="left:10px;top:381px;width:1px;height:79px;background:#a3a3a3;"></div>
<div style="left:23px;top:366px;width:1px;height:15px;background:#808895;"></div>
<div style="left:23px;top:381px;width:1px;height:79px;background:#a3a3a3;"></div>
<div style="left:137px;top:366px;width:1px;height:15px;background:#808895;"></div>
<div style="left:137px;top:381px;width:1px;height:79px;background:#a3a3a3;"></div>
<div style="left:199px;top:366px;width:1px;height:15px;background:#808895;"></div>
<div style="left:199px;top:381px;width:1px;height:79px;background:#a3a3a3;"></div>
<div style="left:10px;top:381px;width:190px;height:1px;background:#6f8aab;"></div>
<div class="t" style="left:10px;top:382.3px;width:13px;height:16px;font-size:8.8px;text-align:center;color:#333333;transform:scaleY(1.1);line-height:16px;">a.</div>
<div class="t" style="left:23px;top:382.3px;width:114px;height:16px;font-size:8.8px;text-align:left;color:#333333;transform:scaleY(1.1);padding-left:2.5px;box-sizing:border-box;line-height:16px;">Total assets</div>
<div style="left:138px;top:382px;width:60px;height:14px;border:1px solid #4b6c9f;"></div>
<svg style="position:absolute;left:139px;top:383px" width="5" height="6"><polygon points="0,0 3.6,2.4 0,4.8" fill="#2b6fd0"/></svg>
<div class="t" style="left:137px;top:382.3px;width:18px;height:16px;font-size:8.8px;text-align:left;color:#333333;transform:scaleY(1.1);padding-left:9.8px;box-sizing:border-box;line-height:16px;">$</div>
<div class="t" style="left:137px;top:382.3px;width:62px;height:16px;font-size:8.8px;text-align:right;color:#333333;transform:scaleY(1.1);padding-right:2px;box-sizing:border-box;line-height:16px;">1,109,000</div>
<div class="t" style="left:10px;top:398.3px;width:13px;height:15px;font-size:8.8px;text-align:center;color:#333333;transform:scaleY(1.1);line-height:15px;">b.</div>
<div class="t" style="left:23px;top:398.3px;width:114px;height:15px;font-size:8.8px;text-align:left;color:#333333;transform:scaleY(1.1);padding-left:2.5px;box-sizing:border-box;line-height:15px;">Total liabilities</div>
<div style="left:138px;top:398px;width:60px;height:13px;border:1px solid #4b6c9f;"></div>
<svg style="position:absolute;left:139px;top:399px" width="5" height="6"><polygon points="0,0 3.6,2.4 0,4.8" fill="#2b6fd0"/></svg>
<div class="t" style="left:137px;top:398.3px;width:18px;height:15px;font-size:8.8px;text-align:left;color:#333333;transform:scaleY(1.1);padding-left:9.8px;box-sizing:border-box;line-height:15px;">$</div>
<div class="t" style="left:137px;top:398.3px;width:62px;height:15px;font-size:8.8px;text-align:right;color:#333333;transform:scaleY(1.1);padding-right:2px;box-sizing:border-box;line-height:15px;">569,000</div>
<div class="t" style="left:10px;top:413.3px;width:13px;height:16px;font-size:8.8px;text-align:center;color:#333333;transform:scaleY(1.1);line-height:16px;">c.</div>
<div class="t" style="left:23px;top:413.3px;width:114px;height:16px;font-size:8.8px;text-align:left;color:#333333;transform:scaleY(1.1);padding-left:2.5px;box-sizing:border-box;line-height:16px;">Total shareholders' equity</div>
<div style="left:138px;top:413px;width:60px;height:14px;border:1px solid #4b6c9f;"></div>
<svg style="position:absolute;left:139px;top:414px" width="5" height="6"><polygon points="0,0 3.6,2.4 0,4.8" fill="#2b6fd0"/></svg>
<div class="t" style="left:137px;top:413.3px;width:18px;height:16px;font-size:8.8px;text-align:left;color:#333333;transform:scaleY(1.1);padding-left:9.8px;box-sizing:border-box;line-height:16px;">$</div>
<div class="t" style="left:137px;top:413.3px;width:62px;height:16px;font-size:8.8px;text-align:right;color:#333333;transform:scaleY(1.1);padding-right:2px;box-sizing:border-box;line-height:16px;">540,000</div>
<div class="t" style="left:10px;top:429.3px;width:13px;height:15px;font-size:8.8px;text-align:center;color:#333333;transform:scaleY(1.1);line-height:15px;">d.</div>
<div class="t" style="left:23px;top:429.3px;width:114px;height:15px;font-size:8.8px;text-align:left;color:#333333;transform:scaleY(1.1);padding-left:2.5px;box-sizing:border-box;line-height:15px;">Cash balance</div>
<div style="left:138px;top:429px;width:60px;height:13px;border:1px solid #4b6c9f;"></div>
<svg style="position:absolute;left:139px;top:430px" width="5" height="6"><polygon points="0,0 3.6,2.4 0,4.8" fill="#2b6fd0"/></svg>
<div class="t" style="left:137px;top:429.3px;width:18px;height:15px;font-size:8.8px;text-align:left;color:#333333;transform:scaleY(1.1);padding-left:9.8px;box-sizing:border-box;line-height:15px;">$</div>
<div class="t" style="left:137px;top:429.3px;width:62px;height:15px;font-size:8.8px;text-align:right;color:#333333;transform:scaleY(1.1);padding-right:2px;box-sizing:border-box;line-height:15px;">124,900</div>
<div class="t" style="left:10px;top:444.3px;width:13px;height:16px;font-size:8.8px;text-align:center;color:#333333;transform:scaleY(1.1);line-height:16px;">e.</div>
<div class="t" style="left:23px;top:444.3px;width:114px;height:16px;font-size:8.8px;text-align:left;color:#333333;transform:scaleY(1.1);padding-left:2.5px;box-sizing:border-box;line-height:16px;">Total current assets</div>
<div style="left:138px;top:444px;width:60px;height:14px;border:1px solid #4b6c9f;"></div>
<svg style="position:absolute;left:139px;top:445px" width="5" height="6"><polygon points="0,0 3.6,2.4 0,4.8" fill="#2b6fd0"/></svg>
<div class="t" style="left:137px;top:444.3px;width:18px;height:16px;font-size:8.8px;text-align:left;color:#333333;transform:scaleY(1.1);padding-left:9.8px;box-sizing:border-box;line-height:16px;">$</div>
<div class="t" style="left:137px;top:444.3px;width:62px;height:16px;font-size:8.8px;text-align:right;color:#333333;transform:scaleY(1.1);padding-right:2px;box-sizing:border-box;line-height:16px;">148,000</div>
</body></html>
